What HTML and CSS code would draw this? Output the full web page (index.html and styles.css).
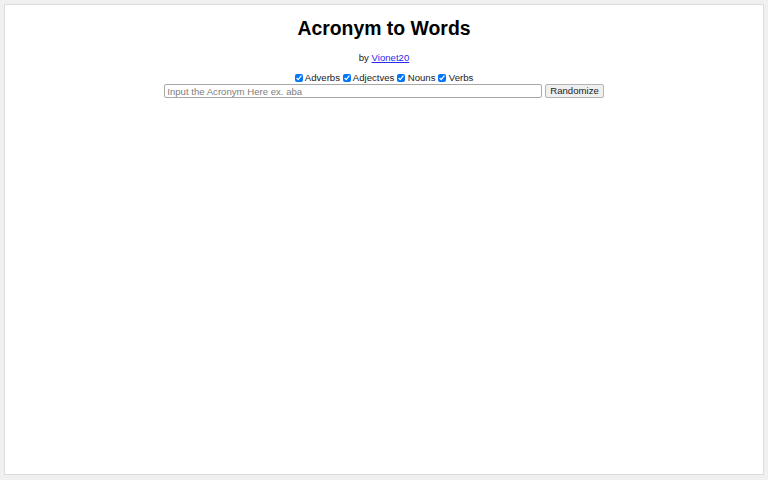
FILE: index.html
```html
<!DOCTYPE html>
<html lang="en">
<head>
    <meta charset="UTF-8">
    <meta name="viewport" content="width=device-width, initial-scale=1.0">
    <title>Acronym to Words</title>
    <link rel="stylesheet" href="styles.css">
</head>
<body>
    <div class="frame">
        <h1>Acronym to Words</h1>
        <p class="author">by <a href="#">Vionet20</a></p>
        <div class="options">
            <label><input type="checkbox" checked> Adverbs</label>
            <label><input type="checkbox" checked> Adjectves</label>
            <label><input type="checkbox" checked> Nouns</label>
            <label><input type="checkbox" checked> Verbs</label>
        </div>
        <div class="controls">
            <input type="text" id="acronym" placeholder="Input the Acronym Here ex. aba">
            <button type="button" id="randomize">Randomize</button>
        </div>
        <div id="result"></div>
    </div>
</body>
</html>
```

FILE: styles.css
```css
/* page frame */
html, body {
    height: 100%;
}

body {
    margin: 0;
    padding: 4px 4px 5px 4px;
    box-sizing: border-box;
    background-color: #f0f0f0;
    font-family: "Liberation Sans", Arial, sans-serif;
}

.frame {
    height: 100%;
    box-sizing: border-box;
    background-color: #fff;
    border: 1px solid #dcdcdc;
    text-align: center;
    color: #000;
}

h1 {
    font-size: 19.4px;
    font-weight: bold;
    margin: 12px 0 0;
    line-height: 23px;
}

.author {
    font-size: 9.6px;
    margin: 12px 0 0;
    line-height: 12px;
    color: #222;
}

.author a {
    color: #2a2aee;
}

.options {
    font-size: 9.6px;
    margin-top: 8px;
    line-height: 12px;
    color: #222;
}

.options input {
    width: 8px;
    height: 8px;
    margin: 0;
    vertical-align: -1px;
}

.controls {
    display: flex;
    justify-content: center;
    align-items: center;
    gap: 3px;
}

#acronym {
    width: 378px;
    height: 14px;
    box-sizing: border-box;
    font-size: 9.6px;
    font-family: inherit;
    padding: 0 2px;
    border: 1px solid #a8a8a8;
    border-radius: 2px;
}

#acronym::placeholder {
    color: #808080;
}

#randomize {
    height: 14px;
    padding: 0 4px;
    font-size: 9.6px;
    font-family: inherit;
    color: #222;
    border: 1px solid #b4b4b4;
    border-radius: 2px;
    background-color: #efefef;
    line-height: 12px;
}
```
